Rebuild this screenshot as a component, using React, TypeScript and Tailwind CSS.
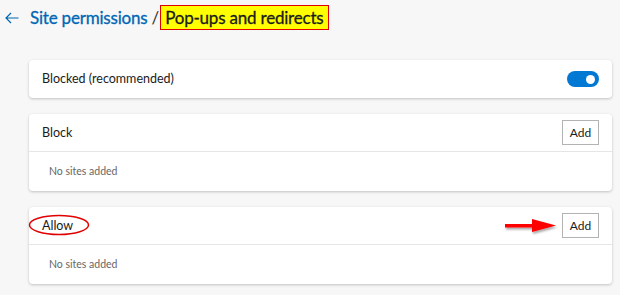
import React from 'react';

function Toggle() {
  return (
    <div className="flex h-[16px] w-[32px] items-center justify-end rounded-full bg-[#0078d4] pr-[4px]">
      <div className="h-[9px] w-[9px] rounded-full bg-white" />
    </div>
  );
}

function AddButton() {
  return (
    <button className="flex h-[25px] w-[37px] items-center justify-center border border-[#b3b3b3] bg-white text-[12px] text-[#1b1b1b]">
      Add
    </button>
  );
}

function SiteList({ title, circled, arrow }: { title: string; circled?: boolean; arrow?: boolean }) {
  return (
    <div className="rounded-[4px] bg-white shadow-[0_1px_3px_rgba(0,0,0,0.22)]">
      <div className="flex h-[38px] items-center justify-between border-b border-[#e5e5e5] pl-[13px] pr-[13px]">
        <span className="relative pt-[2px] text-[12.5px] text-[#1b1b1b]">
          {title}
          {circled && (
            <svg className="absolute left-[-14px] top-[-1px]" width="62" height="22" viewBox="0 0 62 22">
              <ellipse cx="31" cy="11" rx="29.5" ry="9.5" fill="none" stroke="#e00000" strokeWidth="1.5" />
            </svg>
          )}
        </span>
        <div className="flex items-center">
          {arrow && (
            <svg className="mr-[4px]" width="54" height="18" viewBox="0 0 54 18">
              <defs>
                <filter id="sh" x="-20%" y="-50%" width="140%" height="200%">
                  <feDropShadow dx="1" dy="2" stdDeviation="1.2" floodColor="#000" floodOpacity="0.35" />
                </filter>
              </defs>
              <g filter="url(#sh)">
                <rect x="1" y="7" width="30" height="3.5" fill="#ff0000" />
                <polygon points="28,2 52,8.5 28,15" fill="#ff0000" />
              </g>
            </svg>
          )}
          <AddButton />
        </div>
      </div>
      <div className="flex h-[39px] items-center pl-[20px] text-[10.5px] text-[#666]">No sites added</div>
    </div>
  );
}

export default function App() {
  return (
    <div className="h-[295px] w-[620px] overflow-hidden bg-[#f7f7f7] font-['Lato',sans-serif]">
      <div className="flex h-[35px] items-center pl-[4px]">
        <svg width="16" height="16" viewBox="0 0 16 16" className="mr-[10px] text-[#0066b4]">
          <path d="M14.5 8H2M7 3L2 8l5 5" fill="none" stroke="currentColor" strokeWidth="1.2" />
        </svg>
        <span className="text-[17px] tracking-[-0.2px] text-[#0066b4] [-webkit-text-stroke:0.3px_#0066b4]">Site permissions</span>
        <span className="ml-[4px] text-[17px] text-[#333]">/</span>
        <span className="ml-[1px] border border-[#e00000] bg-[#ffff00] px-[4px] text-[17px] leading-[23px] tracking-[-0.2px] text-[#1b1b1b] [-webkit-text-stroke:0.3px_#1b1b1b]">
          Pop-ups and redirects
        </span>
      </div>
      <div className="ml-[29px] mr-[8px] mt-[25px] flex flex-col gap-[16px]">
        <div className="flex h-[38px] items-center justify-between rounded-[4px] bg-white pl-[13px] pr-[13px] shadow-[0_1px_3px_rgba(0,0,0,0.22)]">
          <span className="text-[12.5px] text-[#1b1b1b]">Blocked (recommended)</span>
          <Toggle />
        </div>
        <SiteList title="Block" />
        <SiteList title="Allow" circled arrow />
      </div>
    </div>
  );
}
